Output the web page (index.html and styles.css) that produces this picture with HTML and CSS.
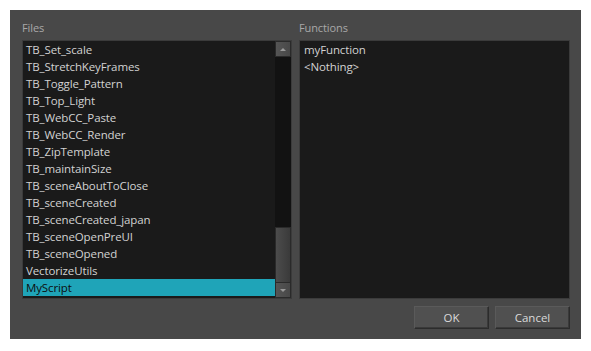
FILE: index.html
```html
<!DOCTYPE html>
<html>
<head>
<meta charset="utf-8">
<link rel="stylesheet" href="styles.css">
</head>
<body>
<div class="dialog">
  <div class="panes">
    <div class="pane files">
      <div class="label">Files</div>
      <div class="listbox">
        <ul class="list">
          <li>TB_Set_scale</li>
          <li>TB_StretchKeyFrames</li>
          <li>TB_Toggle_Pattern</li>
          <li>TB_Top_Light</li>
          <li>TB_WebCC_Paste</li>
          <li>TB_WebCC_Render</li>
          <li>TB_ZipTemplate</li>
          <li>TB_maintainSize</li>
          <li>TB_sceneAboutToClose</li>
          <li>TB_sceneCreated</li>
          <li>TB_sceneCreated_japan</li>
          <li>TB_sceneOpenPreUI</li>
          <li>TB_sceneOpened</li>
          <li>VectorizeUtils</li>
          <li class="sel">MyScript</li>
        </ul>
        <div class="scrollbar">
          <div class="sbtn"><span class="arrow up"></span></div>
          <div class="track"></div>
          <div class="thumb"></div>
          <div class="sbtn"><span class="arrow down"></span></div>
        </div>
      </div>
    </div>
    <div class="pane funcs">
      <div class="label">Functions</div>
      <div class="listbox">
        <ul class="list">
          <li>myFunction</li>
          <li>&lt;Nothing&gt;</li>
        </ul>
      </div>
    </div>
  </div>
  <div class="buttons">
    <button class="btn">OK</button>
    <button class="btn">Cancel</button>
  </div>
</div>
</body>
</html>
```

FILE: styles.css
```css
html, body {
  margin: 0;
  padding: 0;
  background: #ffffff;
}
body {
  padding: 10px;
  font-family: "Open Sans", "Noto Sans", "Liberation Sans", sans-serif;
}
.dialog {
  width: 571px;
  height: 329px;
  background: #484848;
  box-sizing: border-box;
  padding: 12px 11px 0 12px;
  display: flex;
  flex-direction: column;
}
.panes {
  display: flex;
  gap: 7px;
}
.pane {
  display: flex;
  flex-direction: column;
}
.files { width: 270px; }
.funcs { width: 271px; }
.label {
  font-size: 11px;
  color: #a9a9a9;
  height: 18px;
  line-height: 12px;
  letter-spacing: -0.1px;
}
.listbox {
  height: 259px;
  box-sizing: border-box;
  border: 1px solid #3b3b3b;
  background: #1a1a1a;
  display: flex;
}
.list {
  list-style: none;
  margin: 0;
  padding: 0;
  flex: 1;
}
.list li {
  height: 17px;
  line-height: 17px;
  font-size: 11.5px;
  letter-spacing: -0.12px;
  color: #d2d2d2;
  padding-left: 3px;
  white-space: nowrap;
}
.funcs .list li { padding-left: 4px; }
.list li.sel {
  background: #1fa4b8;
  color: #0d0d0d;
}
.scrollbar {
  width: 16px;
  display: flex;
  flex-direction: column;
  background: #111111;
}
.sbtn {
  height: 16px;
  background: linear-gradient(to right, #555, #484848);
  border: 1px solid #2a2a2a;
  box-sizing: border-box;
  display: flex;
  align-items: center;
  justify-content: center;
}
.track {
  flex: 1;
  background: #121212;
}
.thumb {
  height: 55px;
  background: linear-gradient(to right, #4c4c4c, #3a3a3a);
  border: 1px solid #2a2a2a;
  border-bottom: none;
  box-sizing: border-box;
}
.arrow {
  width: 0;
  height: 0;
  border-left: 3px solid transparent;
  border-right: 3px solid transparent;
}
.arrow.up { border-bottom: 3px solid #9a9a9a; }
.arrow.down { border-top: 3px solid #9a9a9a; }
.buttons {
  display: flex;
  justify-content: flex-end;
  gap: 6px;
  margin-top: 7px;
}
.btn {
  width: 75px;
  height: 23px;
  background: #505050;
  border: 1px solid #2c2c2c;
  border-top-color: #5a5a5a;
  border-left-color: #5a5a5a;
  box-shadow: inset -1px -1px 0 #3a3a3a;
  color: #dadada;
  font-family: "Open Sans", "Noto Sans", "Liberation Sans", sans-serif;
  font-size: 11.5px;
  padding: 0;
}
```
